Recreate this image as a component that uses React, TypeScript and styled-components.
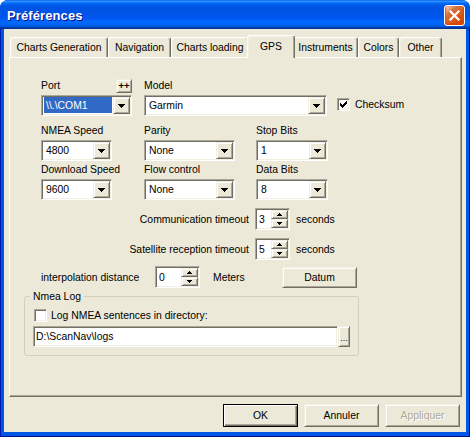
import React from 'react';
import styled, {createGlobalStyle} from 'styled-components';

const GlobalStyle = createGlobalStyle`
  html, body {
    margin: 0;
    padding: 0;
    background: #ffffff;
  }
  body {
    font-family: "Liberation Sans", Arial, sans-serif;
    font-size: 10.4px;
    color: #000;
  }
`

const Window = styled.div`
  width: 470px;
  height: 437px;
  display: flex;
  flex-direction: column;
  border-radius: 8px 8px 0 0;
  overflow: hidden;
  background: #0055e5;
`

const TitleBar = styled.div`
  height: 29px;
  flex: none;
  display: flex;
  align-items: center;
  justify-content: space-between;
  padding: 1px 5px 0 7px;
  box-sizing: border-box;
  background: linear-gradient(180deg, #0058ee 0%, #3593ff 4%, #288eff 6%, #127dff 8%, #036ffc 10%, #0262ee 14%, #0057e5 20%, #0054e3 24%, #0055eb 56%, #005bf5 66%, #026afe 76%, #0062ef 86%, #0052d6 92%, #0040ab 94%, #003092 100%);
`

const Title = styled.span`
  color: #fff;
  font-weight: bold;
  font-size: 13px;
  letter-spacing: 0.1px;
  text-shadow: 1px 1px #0f1089;
`

const CloseButton = styled.div`
  width: 21px;
  height: 21px;
  box-sizing: border-box;
  border: 1px solid #fff;
  border-radius: 3px;
  display: flex;
  align-items: center;
  justify-content: center;
  background: radial-gradient(circle at 90% 90%, #cc4600 0%, #dc6527 55%, #cd7546 68%, #ffccb2 90%, #fff 100%);
  box-shadow: inset 0 -1px 2px 1px #da4600;
`

const Frame = styled.div`
  flex: 1;
  display: flex;
  padding: 0 4px 5px;
  box-shadow: inset 1px 0 #0019a8, inset -1px 0 #00138c, inset 0 -1px #00138c;
`

const Client = styled.div`
  flex: 1;
  display: flex;
  flex-direction: column;
  background: #ece9d8;
  padding: 6px 4px 0 5px;
`

const TabStrip = styled.div`
  height: 22px;
  display: flex;
  align-items: flex-end;
  padding-left: 1px;
`

const Tab = styled.div<{ $w: number; $active?: boolean }>`
  box-sizing: border-box;
  width: ${p => (p.$active ? p.$w + 4 : p.$w)}px;
  height: ${p => (p.$active ? 23 : 20)}px;
  margin: 0 ${p => (p.$active ? -2 : 0)}px ${p => (p.$active ? -1 : 0)}px;
  padding-bottom: ${p => (p.$active ? 2 : 0)}px;
  display: flex;
  align-items: center;
  justify-content: center;
  white-space: nowrap;
  background: #ece9d8;
  border: 1px solid;
  border-bottom: none;
  border-color: #fff #716f64 transparent #fff;
  border-radius: 3px 3px 0 0;
  box-shadow: inset -1px 0 #aca899, inset 1px 1px #f1efe2;
  position: relative;
  z-index: ${p => (p.$active ? 2 : 1)};
`

const Panel = styled.div`
  height: 340px;
  box-sizing: border-box;
  display: flex;
  flex-direction: column;
  border: 1px solid;
  border-color: #fff #716f64 #716f64 #fff;
  box-shadow: inset -1px -1px #aca899;
  padding: 21px 0 0 14px;
`

const Fields = styled.div`
  display: flex;
  flex-direction: column;
  margin-left: 17px;
`

const FieldRow = styled.div<{ $top: number }>`
  display: flex;
  margin-top: ${p => p.$top}px;
`

const FieldCol = styled.div<{ $w: number }>`
  width: ${p => p.$w}px;
  display: flex;
  flex-direction: column;
  gap: 2px;
`

const LabelLine = styled.div<{ $w?: number }>`
  height: 14px;
  line-height: 14px;
  width: ${p => (p.$w ? `${p.$w}px` : 'auto')};
  display: flex;
  justify-content: space-between;
  align-items: center;
  white-space: nowrap;
`

const Raised = styled.div`
  box-sizing: border-box;
  background: #ece9d8;
  border: 1px solid;
  border-color: #f1efe2 #716f64 #716f64 #f1efe2;
  box-shadow: inset 1px 1px #fff, inset -1px -1px #aca899;
  display: flex;
  align-items: center;
  justify-content: center;
`

const SmallButton = styled(Raised)`
  width: 16px;
  height: 14px;
  font-size: 9.5px;
  font-weight: bold;
  line-height: 1;
  padding-bottom: 1px;
`

const Sunken = styled.div`
  box-sizing: border-box;
  background: #fff;
  border: 1px solid;
  border-color: #aca899 #fff #fff #aca899;
  box-shadow: inset 1px 1px #716f64, inset -1px -1px #f1efe2;
  padding: 1px;
`

const Combo = styled(Sunken)<{ $w: number }>`
  width: ${p => p.$w}px;
  height: 21px;
  display: flex;
`

const ComboText = styled.div<{ $selected?: boolean }>`
  flex: 1;
  display: flex;
  align-items: center;
  margin: 0 1px 1px 1px;
  padding-left: 2px;
  background: ${p => (p.$selected ? '#316ac5' : 'transparent')};
  color: ${p => (p.$selected ? '#fff' : '#000')};
  white-space: nowrap;
`

const DropButton = styled(Raised)`
  width: 17px;
  flex: none;
  padding-top: 1px;
`

const CheckCol = styled.div`
  display: flex;
  flex-direction: column;
  gap: 2px;
`

const CheckLine = styled.div<{ $h: number }>`
  height: ${p => p.$h}px;
  display: flex;
  align-items: center;
  gap: 5px;
  white-space: nowrap;
`

const CheckBox = styled(Sunken)`
  width: 13px;
  height: 13px;
  flex: none;
  display: flex;
  align-items: center;
  justify-content: center;
  padding: 0;
`

const TimeoutRow = styled.div<{ $top: number }>`
  display: grid;
  grid-template-columns: 208px 35px auto;
  column-gap: 6px;
  align-items: center;
  margin-top: ${p => p.$top}px;
`

const RightLabel = styled.span`
  justify-self: end;
  white-space: nowrap;
`

const Spin = styled(Sunken)<{ $w: number }>`
  width: ${p => p.$w}px;
  height: 22px;
  display: flex;
`

const SpinValue = styled.div`
  flex: 1;
  display: flex;
  align-items: center;
  padding-left: 2px;
`

const SpinButtons = styled.div`
  width: 17px;
  display: flex;
  flex-direction: column;
`

const SpinButton = styled(Raised)`
  flex: 1;
`

const InterpRow = styled.div`
  display: flex;
  align-items: center;
  margin-top: 6px;
`

const FixedText = styled.span<{ $w: number; $left?: number }>`
  width: ${p => p.$w}px;
  margin-left: ${p => p.$left ?? 0}px;
  white-space: nowrap;
`

const PushButton = styled(Raised)<{ $w: number; $h: number }>`
  width: ${p => p.$w}px;
  height: ${p => p.$h}px;
`

const Group = styled.fieldset`
  width: 335px;
  box-sizing: border-box;
  margin: 2px 0 0 0;
  padding: 0 8px 8px;
  border: 1px solid #d0d0bf;
  border-radius: 3px;
  min-width: 0;
`

const Legend = styled.legend`
  padding: 0 3px;
  margin-left: -3px;
  line-height: 13px;
`

const LogCheck = styled.div`
  display: flex;
  align-items: center;
  gap: 4px;
  height: 13px;
  margin: 6px 0 0 1px;
`

const PathRow = styled.div`
  display: flex;
  margin-top: 4px;
`

const PathInput = styled(Sunken)`
  width: 305px;
  height: 21px;
  display: flex;
  align-items: center;
  padding-left: 2px;
`

const BrowseButton = styled(Raised)`
  width: 12px;
  height: 21px;
  align-items: flex-end;
  padding-bottom: 3px;
  font-size: 9px;
  line-height: 1;
`

const ButtonBar = styled.div`
  display: flex;
  justify-content: flex-end;
  gap: 6px;
  padding-right: 2px;
  margin-top: 7px;
`

const DialogButton = styled(Raised)<{ $default?: boolean; $disabled?: boolean }>`
  width: 75px;
  height: 23px;
  color: ${p => (p.$disabled ? '#aca899' : '#000')};
  text-shadow: ${p => (p.$disabled ? '1px 1px #fff' : 'none')};
  ${p => p.$default && `
    border-color: #000;
    box-shadow: inset 1px 1px #fff, inset -1px -1px #716f64, inset -2px -2px #aca899;
  `}
`

const Arrow = () => (
  <svg width="7" height="4" viewBox="0 0 7 4" shapeRendering="crispEdges">
    <polygon points="0,0 7,0 3.5,4" fill="#000"/>
  </svg>
);

const SpinArrow = ({up}: { up?: boolean }) => (
  <svg width="5" height="3" viewBox="0 0 5 3" shapeRendering="crispEdges">
    <polygon points={up ? '0,3 5,3 2.5,0' : '0,0 5,0 2.5,3'} fill="#000"/>
  </svg>
);

const Check = () => (
  <svg width="7" height="7" viewBox="0 0 7 7" shapeRendering="crispEdges">
    <polygon points="0,2 2,4 7,-1 7,2 2,7 0,5" fill="#000"/>
  </svg>
);

const Select = ({w, value, selected}: { w: number; value: string; selected?: boolean }) => (
  <Combo $w={w}>
    <ComboText $selected={selected}>{value}</ComboText>
    <DropButton><Arrow/></DropButton>
  </Combo>
);

const Spinner = ({w, value}: { w: number; value: string }) => (
  <Spin $w={w}>
    <SpinValue>{value}</SpinValue>
    <SpinButtons>
      <SpinButton><SpinArrow up/></SpinButton>
      <SpinButton><SpinArrow/></SpinButton>
    </SpinButtons>
  </Spin>
);

const tabs = [
  {label: 'Charts Generation', w: 98},
  {label: 'Navigation', w: 63},
  {label: 'Charts loading', w: 78},
  {label: 'GPS', w: 44, active: true},
  {label: 'Instruments', w: 65},
  {label: 'Colors', w: 41},
  {label: 'Other', w: 43},
];

export default function App() {
  return (
    <>
      <GlobalStyle/>
      <Window>
        <TitleBar>
          <Title>Préférences</Title>
          <CloseButton>
            <svg width="13" height="13" viewBox="0 0 13 13">
              <path d="M2.5 2.5 L10.5 10.5 M10.5 2.5 L2.5 10.5" stroke="#fff" strokeWidth="2.2" strokeLinecap="square"/>
            </svg>
          </CloseButton>
        </TitleBar>
        <Frame>
          <Client>
            <TabStrip>
              {tabs.map(t => (
                <Tab key={t.label} $w={t.w} $active={t.active}>{t.label}</Tab>
              ))}
            </TabStrip>
            <Panel>
              <Fields>
                <FieldRow $top={0}>
                  <FieldCol $w={103}>
                    <LabelLine $w={91}>
                      <span>Port</span>
                      <SmallButton>++</SmallButton>
                    </LabelLine>
                    <Select w={91} value="\\.\COM1" selected/>
                  </FieldCol>
                  <FieldCol $w={193}>
                    <LabelLine>Model</LabelLine>
                    <Select w={183} value="Garmin"/>
                  </FieldCol>
                  <CheckCol>
                    <CheckLine $h={14}/>
                    <CheckLine $h={19}>
                      <CheckBox><Check/></CheckBox>
                      <span>Checksum</span>
                    </CheckLine>
                  </CheckCol>
                </FieldRow>

                <FieldRow $top={8}>
                  <FieldCol $w={103}>
                    <LabelLine>NMEA Speed</LabelLine>
                    <Select w={71} value="4800"/>
                  </FieldCol>
                  <FieldCol $w={112}>
                    <LabelLine>Parity</LabelLine>
                    <Select w={91} value="None"/>
                  </FieldCol>
                  <FieldCol $w={72}>
                    <LabelLine>Stop Bits</LabelLine>
                    <Select w={72} value="1"/>
                  </FieldCol>
                </FieldRow>

                <FieldRow $top={2}>
                  <FieldCol $w={103}>
                    <LabelLine>Download Speed</LabelLine>
                    <Select w={71} value="9600"/>
                  </FieldCol>
                  <FieldCol $w={112}>
                    <LabelLine>Flow control</LabelLine>
                    <Select w={91} value="None"/>
                  </FieldCol>
                  <FieldCol $w={72}>
                    <LabelLine>Data Bits</LabelLine>
                    <Select w={72} value="8"/>
                  </FieldCol>
                </FieldRow>

                <TimeoutRow $top={8}>
                  <RightLabel>Communication timeout</RightLabel>
                  <Spinner w={35} value="3"/>
                  <span>seconds</span>
                </TimeoutRow>

                <TimeoutRow $top={8}>
                  <RightLabel>Satellite reception timeout</RightLabel>
                  <Spinner w={35} value="5"/>
                  <span>seconds</span>
                </TimeoutRow>

                <InterpRow>
                  <FixedText $w={114}>interpolation distance</FixedText>
                  <Spinner w={45} value="0"/>
                  <FixedText $w={69} $left={13}>Meters</FixedText>
                  <PushButton $w={75} $h={21}>Datum</PushButton>
                </InterpRow>
              </Fields>

              <Group>
                <Legend>Nmea Log</Legend>
                <LogCheck>
                  <CheckBox/>
                  <span>Log NMEA sentences in directory:</span>
                </LogCheck>
                <PathRow>
                  <PathInput>D:\ScanNav\logs</PathInput>
                  <BrowseButton>...</BrowseButton>
                </PathRow>
              </Group>
            </Panel>
            <ButtonBar>
              <DialogButton $default>OK</DialogButton>
              <DialogButton>Annuler</DialogButton>
              <DialogButton $disabled>Appliquer</DialogButton>
            </ButtonBar>
          </Client>
        </Frame>
      </Window>
    </>
  );
}
